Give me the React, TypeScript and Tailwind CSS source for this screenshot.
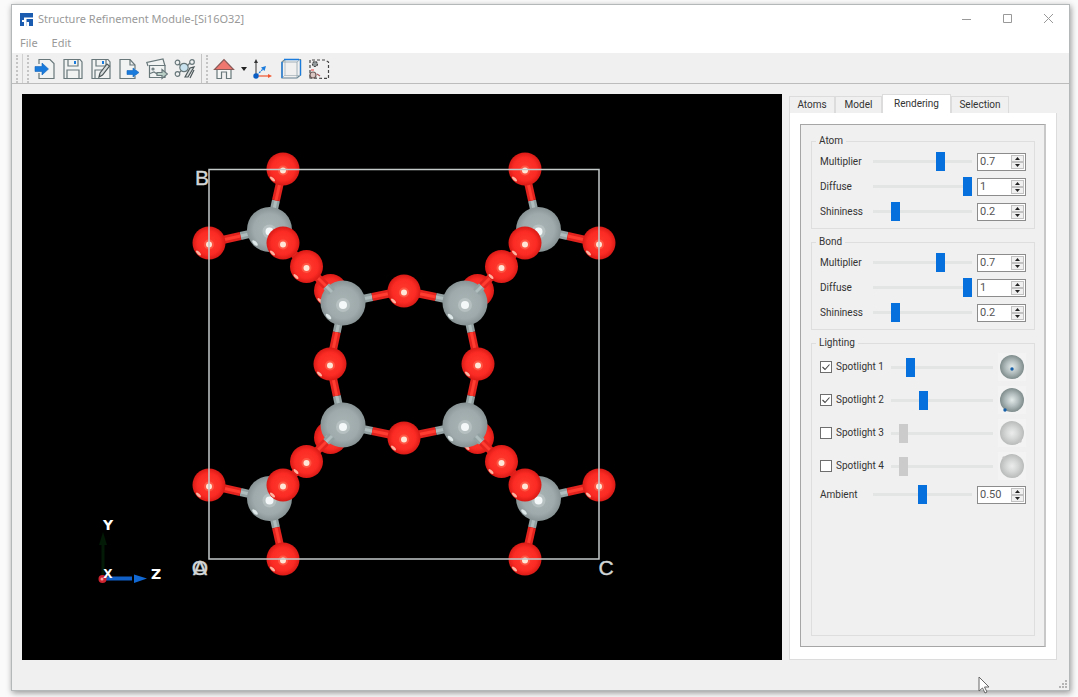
import React, { useState } from 'react';

interface Point {
  x: number;
  y: number;
}

const iconProps = { width: 22, height: 22, viewBox: '0 0 22 22', fill: 'none', stroke: '#68777a', strokeWidth: 1.2 };

const ImportIcon = () => (
  <svg {...iconProps}>
    <path d="M5 6V1.500H16L20 5.500V20.500H5V15" fill="#f1f3f3" />
    <path d="M1 8.500h7V5L14.500 11 8 17V13.500H1z" fill="#1a7bdc" stroke="#1667b8" strokeWidth=".6" />
  </svg>
);

const SaveIcon = () => (
  <svg {...iconProps}>
    <path d="M2 1.500H18L20 4V20.500H2z" fill="#f1f3f3" />
    <path d="M6 1.500V8h10V1.500M5 20V12h12v8" />
    <path d="M13 3v3" stroke="#1a7bdc" strokeWidth="2" />
  </svg>
);

const SaveAsIcon = () => (
  <svg {...iconProps}>
    <path d="M2 1.500H18L20 4V20.500H2z" fill="#f1f3f3" />
    <path d="M6 1.500V8h10V1.500M5 20V12h8" />
    <path d="M13 3v3" stroke="#1a7bdc" strokeWidth="2" />
    <path d="M9 19l1-4 7-9 2.500 2-7 9z" fill="#d8dcdc" stroke="#4c5759" />
  </svg>
);

const ExportIcon = () => (
  <svg {...iconProps}>
    <path d="M17 11V7L12 1.500H2V20.500H17V18" fill="#f1f3f3" />
    <path d="M12 1.500V7h5" />
    <path d="M9 12.500h6V10l6 4.500L15 19v-2.500H9z" fill="#1a7bdc" stroke="#1667b8" strokeWidth=".6" />
  </svg>
);

const PicturesIcon = () => (
  <svg {...iconProps}>
    <path d="M2 8L.8 4.500 17 1l2 7" fill="#f1f3f3" />
    <path d="M3.500 7.500H19v12H3.500z" fill="#f1f3f3" />
    <path d="M4 15.500l4-1.500 4 2.500" />
    <circle cx="7" cy="11" r="1" />
    <path d="M11 14.500h5V11.500l5.500 4.500-5.500 4.500v-3h-5z" fill="#b9cfc5" />
  </svg>
);

const MoleculeIcon = () => (
  <svg {...iconProps}>
    <path d="M5 6l3 3M13 8l3-3M7 13l-3 3" />
    <circle cx="3.500" cy="4.500" r="2.300" fill="#f1f3f3" />
    <circle cx="18" cy="4" r="2.300" fill="#f1f3f3" />
    <circle cx="10" cy="9.500" r="4.200" fill="#c9e3f0" />
    <circle cx="3.500" cy="16" r="2.300" fill="#f1f3f3" />
    <path d="M11 19l5-9 4-1-6 10zM16 20l4-8" fill="#d8dcdc" stroke="#4c5759" />
  </svg>
);

const HomeIcon = () => (
  <svg {...iconProps}>
    <path d="M4 11v9.500h4.500V14h5v6.500H18V11" fill="#f4f6f6" />
    <path d="M1.500 11.500L11 1.500l9.500 10z" fill="#f0776f" stroke="#8a5a58" />
  </svg>
);

const AxesIcon = () => (
  <svg {...iconProps}>
    <path d="M4 17V4" stroke="#555" />
    <path d="M4 1l2 4H2z" fill="#333" stroke="none" />
    <path d="M4 18h12" stroke="#f0552f" />
    <path d="M20 18l-4-2v4z" fill="#f0552f" stroke="none" />
    <path d="M5 17l6-6" stroke="#1a7bdc" strokeDasharray="2 1" />
    <path d="M14 8l-1.500 5-3.500-3.500z" fill="#1a7bdc" stroke="none" />
    <circle cx="4" cy="18" r="2.700" fill="#0b5fc4" stroke="none" />
  </svg>
);

const CellIcon = () => (
  <svg {...iconProps}>
    <path d="M2 4l3-2.500h15.500V17L17 20H2z" stroke="#62808f" />
    <path d="M5 2v15.500h15M2 20l3-3" stroke="#a9b6bd" strokeWidth=".8" />
    <path d="M2 4h15v16M17 4l3-2.500" stroke="#8fa3ae" strokeWidth=".8" />
    <path d="M20.500 2v15.500M2 4v16M4 1.500h15" stroke="#1a7bdc" strokeWidth="1.300" />
  </svg>
);

const BoundaryIcon = () => (
  <svg {...iconProps}>
    <path d="M2 20V2h15l3.500 2v16.500z" stroke="#444" strokeDasharray="3 2" />
    <circle cx="7" cy="6" r="2.500" fill="#929a9b" stroke="#444" strokeDasharray="2 1" />
    <circle cx="5" cy="17" r="3" fill="#d9c6c3" stroke="#6b5a58" />
    <path d="M9 16l3 2" stroke="#a55" />
    <path d="M3 12h3" stroke="#e55" />
  </svg>
);

const fileTools = [
  { label: 'Import', icon: <ImportIcon /> },
  { label: 'Save', icon: <SaveIcon /> },
  { label: 'Save as', icon: <SaveAsIcon /> },
  { label: 'Export', icon: <ExportIcon /> },
  { label: 'Export images', icon: <PicturesIcon /> },
  { label: 'Edit structure', icon: <MoleculeIcon /> },
];

const viewTools = [
  { label: 'Axes', icon: <AxesIcon /> },
  { label: 'Unit cell', icon: <CellIcon /> },
  { label: 'Boundary', icon: <BoundaryIcon /> },
];

const ToolButton: React.FC<{ label: string; children: React.ReactNode }> = ({ label, children }) => (
  <button aria-label={label} className="flex h-7 w-7 items-center justify-center hover:bg-[#dcebf7]">
    {children}
  </button>
);

const Grip = () => <div className="h-7 w-1 border-l-2 border-dotted border-[#c4c4c4]" />;

const Oxygen: React.FC<Point> = ({ x, y }) => (
  <g transform={`translate(${x} ${y})`}>
    <circle r="16.500" fill="url(#oxygen)" />
    <ellipse cx="-10.500" cy="10" rx="3.200" ry="1.300" fill="#ffb3a0" transform="rotate(45 -10.500 10)" />
    <circle cy="1.500" r="5" fill="#ff6a55" opacity=".6" />
    <circle cy="1.500" r="3" fill="#ffe6d6" />
  </g>
);

const Silicon: React.FC<Point> = ({ x, y }) => (
  <g transform={`translate(${x} ${y})`}>
    <circle r="22.500" fill="url(#silicon)" />
    <ellipse cx="-14.500" cy="13.500" rx="3.500" ry="1.600" fill="#dfe8e8" transform="rotate(45 -14.500 13.500)" />
    <circle cy="2" r="7" fill="#c3cccc" opacity=".6" />
    <circle cy="2" r="4" fill="#f4f8f8" />
  </g>
);

// Two-tone stick, silicon half first
const Bond: React.FC<{ from: Point; to: Point; split?: number }> = ({ from, to, split = 0.48 }) => {
  const mx = from.x + (to.x - from.x) * split;
  const my = from.y + (to.y - from.y) * split;
  return (
    <g>
      <path d={`M${from.x} ${from.y}L${mx} ${my}`} stroke="#93a0a1" strokeWidth="8" />
      <path d={`M${from.x} ${from.y}L${mx} ${my}`} stroke="#b0bdbe" strokeWidth="3" />
      <path d={`M${mx} ${my}L${to.x} ${to.y}`} stroke="#e3231e" strokeWidth="8" />
      <path d={`M${mx} ${my}L${to.x} ${to.y}`} stroke="#ff3d31" strokeWidth="3" />
    </g>
  );
};

const corners = [
  { sx: -1, sy: -1 },
  { sx: 1, sy: -1 },
  { sx: -1, sy: 1 },
  { sx: 1, sy: 1 },
];

const Structure = () => (
  <svg viewBox="22 94 760 566" className="h-full w-full" role="img" aria-label="Si16O32 structure">
    <defs>
      <radialGradient id="oxygen">
        <stop offset="0" stopColor="#ff3a2e" />
        <stop offset=".7" stopColor="#fb2b24" />
        <stop offset="1" stopColor="#d91a16" />
      </radialGradient>
      <radialGradient id="silicon">
        <stop offset="0" stopColor="#a9b4b5" />
        <stop offset=".7" stopColor="#9eaaab" />
        <stop offset="1" stopColor="#869293" />
      </radialGradient>
    </defs>

    {corners.map(({ sx, sy }) => {
      const at = (dx: number, dy: number): Point => ({ x: 404 + sx * dx, y: 364 + sy * dy });
      const inner = at(61, 61);
      const outer = at(134.5, 134.5);
      return (
        <g key={`${sx}${sy}`}>
          <Bond from={outer} to={at(121, 195)} />
          <Bond from={outer} to={at(195, 121)} />
          <Oxygen {...at(73.5, 73.5)} />
          <Bond from={inner} to={at(0, 73.5)} />
          <Bond from={inner} to={at(74, 0)} />
          <Silicon {...inner} />
          <Bond from={at(72, 72)} to={at(97, 97)} split={0.24} />
          <Silicon {...outer} />
          <Bond from={at(121, 121)} to={at(97, 97)} split={0} />
          <Oxygen {...at(97.5, 97.5)} />
          <Oxygen {...at(121, 121)} />
          <Oxygen {...at(121, 195)} />
          <Oxygen {...at(195, 121)} />
        </g>
      );
    })}
    <Oxygen x={404} y={291} />
    <Oxygen x={404} y={438} />
    <Oxygen x={330} y={364} />
    <Oxygen x={478} y={364} />

    <path d="M209 169.500H599V559H209z" fill="none" stroke="#c3c9c9" strokeWidth="1.500" />
    <g fill="#d2d6d6" stroke="#d2d6d6" strokeWidth=".4" fontFamily="Liberation Sans, sans-serif" fontSize="21" textAnchor="middle">
      <text x="202" y="185">B</text>
      <text x="606" y="575">C</text>
      <text x="200" y="575">O</text>
      <text x="200" y="575">A</text>
    </g>

    <path d="M103 577V545" stroke="#021a06" strokeWidth="3" />
    <path d="M103 532l4 13h-8z" fill="#021a06" />
    <path d="M104 578.500h28" stroke="#1060c8" strokeWidth="4" />
    <path d="M134 574.500v8.500l13-4.500z" fill="#1268d2" />
    <circle cx="102.500" cy="579" r="4" fill="#cf2430" />
    <circle cx="102" cy="579" r="1.500" fill="#f3a0a0" />
    <g fill="#fff" fontFamily="DejaVu Sans, sans-serif" fontWeight="700" fontSize="14" textAnchor="middle">
      <text x="108" y="530">Y</text>
      <text x="108" y="578" fontSize="12">X</text>
      <text x="156" y="579">Z</text>
    </g>
  </svg>
);

interface SliderProps {
  label: string;
  value: number;
  onChange: (value: number) => void;
  disabled?: boolean;
}

const Slider: React.FC<SliderProps> = ({ label, value, onChange, disabled }) => (
  <input
    type="range"
    aria-label={label}
    min={0}
    max={1}
    step={0.01}
    value={value}
    disabled={disabled}
    onChange={(e) => onChange(Number(e.target.value))}
    className="h-5 min-w-0 flex-1 appearance-none bg-transparent [&::-webkit-slider-runnable-track]:h-[3px] [&::-webkit-slider-runnable-track]:bg-[#e3e5e5] [&::-webkit-slider-thumb]:-mt-2 [&::-webkit-slider-thumb]:h-[19px] [&::-webkit-slider-thumb]:w-[9px] [&::-webkit-slider-thumb]:appearance-none [&::-webkit-slider-thumb]:bg-[#0670dc] disabled:[&::-webkit-slider-thumb]:bg-[#cbcbcb]"
  />
);

const ValueRow: React.FC<{ id: string; label: string; initial: number; digits?: number }> = ({ id, label, initial, digits }) => {
  const [value, setValue] = useState(initial);
  const step = (delta: number) => setValue((v) => Math.min(1, Math.max(0, Number((v + delta).toFixed(2)))));

  return (
    <div className="flex h-[25px] items-center">
      <label htmlFor={id} className="w-[53px]">{label}</label>
      <Slider label={`${label} slider`} value={value} onChange={setValue} />
      <div className="ml-[5px] flex h-[18px] w-[49px] border border-[#8c8c8c] bg-white p-px">
        <input
          id={id}
          value={digits ? value.toFixed(digits) : String(value)}
          onChange={(e) => setValue(Number(e.target.value) || 0)}
          className="min-w-0 flex-1 bg-transparent pl-px text-[11px] leading-3 text-[#555] outline-none"
        />
        <div className="flex w-[13px] flex-col">
          <button aria-label={`Increase ${label}`} onClick={() => step(0.1)} className="flex flex-1 items-center justify-center border border-[#c2c2c2] bg-[#f0f0f0]">
            <svg width="5" height="3" viewBox="0 0 5 3"><path d="M0 3L2.500 0 5 3z" fill="#222" /></svg>
          </button>
          <button aria-label={`Decrease ${label}`} onClick={() => step(-0.1)} className="flex flex-1 items-center justify-center border border-[#c2c2c2] bg-[#f0f0f0]">
            <svg width="5" height="3" viewBox="0 0 5 3"><path d="M0 0L2.500 3 5 0z" fill="#222" /></svg>
          </button>
        </div>
      </div>
    </div>
  );
};

interface SpotlightProps {
  index: number;
  initial: number;
  enabled: boolean;
  dot?: Point;
}

const SpotlightRow: React.FC<SpotlightProps> = ({ index, initial, enabled, dot }) => {
  const [on, setOn] = useState(enabled);
  const [value, setValue] = useState(initial);

  return (
    <div className="flex h-8 items-center">
      <label className="flex w-[71px] items-center gap-1">
        <span className="grid h-3 w-3 shrink-0">
          <input
            type="checkbox"
            checked={on}
            onChange={(e) => setOn(e.target.checked)}
            className="col-start-1 row-start-1 h-3 w-3 appearance-none border border-[#6e6e6e] bg-white"
          />
          {on && (
            <svg width="12" height="12" viewBox="0 0 12 12" className="pointer-events-none col-start-1 row-start-1">
              <path d="M2.500 6L5 8.500 9.500 3.500" fill="none" stroke="#444" strokeWidth="1.100" />
            </svg>
          )}
        </span>
        Spotlight {index}
      </label>
      <Slider label={`Spotlight ${index} intensity`} value={value} onChange={setValue} disabled={!on} />
      <svg width="28" height="28" viewBox="0 0 28 28" className="ml-[5px] shrink-0 bg-[#f3f3f3]">
        <defs>
          <radialGradient id={`ball${index}`}>
            <stop offset="0" stopColor={on ? '#e4eaea' : '#ececec'} />
            <stop offset=".5" stopColor={on ? '#b5bfbf' : '#d5d7d7'} />
            <stop offset="1" stopColor={on ? '#7f8c8c' : '#b9bbbb'} />
          </radialGradient>
        </defs>
        <circle cx="14" cy="14" r="12" fill={`url(#ball${index})`} />
        {dot && <circle cx={dot.x} cy={dot.y} r="1.700" fill={on ? '#155fa8' : '#c3c3c3'} />}
      </svg>
    </div>
  );
};

const Group: React.FC<{ title: string; grow?: boolean; children: React.ReactNode }> = ({ title, grow, children }) => (
  <fieldset className={`min-w-0 border border-[#dedede] px-2 pt-[2px] pb-1 ${grow ? 'flex-1' : ''}`}>
    <legend className="-ml-1 px-[3px] leading-3">{title}</legend>
    {children}
  </fieldset>
);

const tabs = ['Atoms', 'Model', 'Rendering', 'Selection'];
const tabWidths = ['w-[46px]', 'w-[47px]', 'w-[69px]', 'w-[58px]'];

const RenderingPanel = () => (
  <div className="flex w-[268px] shrink-0 flex-col text-[10px] leading-3 text-[#333]">
    <div role="tablist" className="flex items-end">
      {tabs.map((tab, i) => (
        <button
          key={tab}
          role="tab"
          aria-selected={tab === 'Rendering'}
          className={`${tabWidths[i]} border border-b-0 border-[#dcdcdc] ${
            tab === 'Rendering' ? 'h-[19px] bg-white' : 'h-[17px] bg-[#f0f0f0]'
          }`}
        >
          {tab}
        </button>
      ))}
    </div>
    <div role="tabpanel" className="flex flex-1 flex-col border border-t-0 border-[#dcdcdc] bg-white p-[10px] pt-[11px] pb-3">
      <div className="flex flex-1 flex-col gap-[7px] border border-r-2 border-[#a6a6a6] border-r-[#c8c8c8] bg-[#f0f0f0] p-[10px] pr-[9px]">
        <Group title="Atom">
          <ValueRow id="atom-multiplier" label="Multiplier" initial={0.7} />
          <ValueRow id="atom-diffuse" label="Diffuse" initial={1} />
          <ValueRow id="atom-shininess" label="Shininess" initial={0.2} />
        </Group>
        <Group title="Bond">
          <ValueRow id="bond-multiplier" label="Multiplier" initial={0.7} />
          <ValueRow id="bond-diffuse" label="Diffuse" initial={1} />
          <ValueRow id="bond-shininess" label="Shininess" initial={0.2} />
        </Group>
        <Group title="Lighting" grow>
          <div className="flex flex-col gap-px">
            <SpotlightRow index={1} initial={0.16} enabled dot={{ x: 14, y: 16 }} />
            <SpotlightRow index={2} initial={0.3} enabled dot={{ x: 7, y: 24 }} />
            <SpotlightRow index={3} initial={0.09} enabled={false} dot={{ x: 22, y: 22 }} />
            <SpotlightRow index={4} initial={0.09} enabled={false} dot={{ x: 6, y: 6 }} />
          </div>
          <ValueRow id="ambient" label="Ambient" initial={0.5} digits={2} />
        </Group>
      </div>
    </div>
  </div>
);

const TitleBar = () => (
  <header className="bg-white text-[11px] text-[#999]">
    <div className="flex h-7 items-center pl-2">
      <svg width="13" height="13" viewBox="0 0 13 13">
        <path d="M0 0h13v13H0z" fill="#1c5cb0" />
        <path d="M4 13V9H2V7h2V4.500h9V6H6.500v7z" fill="#fff" />
        <path d="M6.500 9H9v4H6.500z" fill="#fff" />
      </svg>
      <h1 className="ml-[5px] flex-1">Structure Refinement Module-[Si16O32]</h1>
      <button aria-label="Minimize" className="flex w-[41px] justify-center">
        <svg width="10" height="10" viewBox="0 0 10 10"><path d="M0 5.500h9" stroke="#999" /></svg>
      </button>
      <button aria-label="Maximize" className="flex w-[41px] justify-center">
        <svg width="10" height="10" viewBox="0 0 10 10"><path d="M.5.500h8v8h-8z" fill="none" stroke="#999" /></svg>
      </button>
      <button aria-label="Close" className="flex w-[41px] justify-center">
        <svg width="10" height="10" viewBox="0 0 10 10"><path d="M0 0l9 9M9 0L0 9" stroke="#999" /></svg>
      </button>
    </div>
    <nav className="flex h-5 items-center gap-[14px] pl-2">
      <button>File</button>
      <button>Edit</button>
    </nav>
  </header>
);

const Toolbar = () => (
  <div className="flex h-[31px] items-center border-b border-[#bcbcbc] pt-px pl-1">
    <Grip />
    <div className="mr-1 ml-[2px] h-full border-l border-[#d0d0d0]" />
    <Grip />
    {fileTools.map((tool) => (
      <ToolButton key={tool.label} label={tool.label}>{tool.icon}</ToolButton>
    ))}
    <div className="mr-1 ml-[2px] h-full border-l border-[#c4c4c4]" />
    <Grip />
    <ToolButton label="Home view">
      <HomeIcon />
    </ToolButton>
    <button aria-label="Home view options" className="flex h-7 w-[11px] items-center justify-center">
      <svg width="6" height="4" viewBox="0 0 6 4"><path d="M0 0h6L3 4z" fill="#222" /></svg>
    </button>
    {viewTools.map((tool) => (
      <ToolButton key={tool.label} label={tool.label}>{tool.icon}</ToolButton>
    ))}
  </div>
);

export default function App() {
  return (
    <div className="flex min-h-screen flex-col bg-[#fafafa] pt-1 pr-2 pb-[6px] pl-[11px] font-['Noto_Sans','Open_Sans',sans-serif]">
      <div className="relative flex flex-1 flex-col border border-[#b4b8b8] bg-[#f0f0f0] shadow-[1px_2px_6px_rgba(0,0,0,0.4)]">
        <TitleBar />
        <Toolbar />
        <main className="flex flex-1 gap-[7px] pt-[10px] pr-3 pl-[10px] font-['Roboto',sans-serif]">
          <section className="min-w-0 flex-1 bg-black">
            <Structure />
          </section>
          <RenderingPanel />
        </main>
        <footer className="flex h-[30px] items-end justify-end p-[2px]">
          <svg width="8" height="8" viewBox="0 0 8 8" fill="#b4b4b4">
            <path d="M6 0h2v2H6zM3 3h2v2H3zM6 3h2v2H6zM0 6h2v2H0zM3 6h2v2H3zM6 6h2v2H6z" />
          </svg>
        </footer>
        <svg width="12" height="18" viewBox="0 0 12 18" className="pointer-events-none absolute right-[79px] -bottom-1">
          <path d="M1 1v14l3.500-3 2.500 5 2-1-2.500-5H11z" fill="#fff" stroke="#666" />
        </svg>
      </div>
    </div>
  );
}
